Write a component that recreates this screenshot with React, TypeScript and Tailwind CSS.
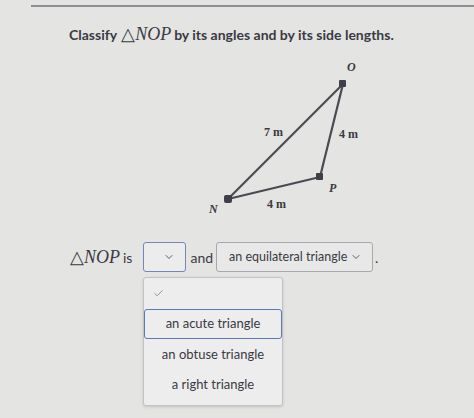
import { ChevronDown, Check } from "lucide-react"

export default function App() {
  return (
    <div className="w-[474px] h-[418px] overflow-hidden bg-[#e4e4e2] text-[#3a3a44] font-['Lato',sans-serif]">
      {/* top rule */}
      <div className="ml-[31px] pt-[5px]">
        <div className="h-[2px] bg-[#8e8e96]" />
      </div>

      {/* question */}
      <div className="mt-[18px] ml-[69px] flex items-baseline text-[14px] font-bold leading-[18px]">
        <span>Classify</span>
        <span className="ml-[4px] mr-[3px] font-['Liberation_Serif',serif] font-normal text-[18px]">
          △<i>NOP</i>
        </span>
        <span>by its angles and by its side lengths.</span>
      </div>

      {/* diagram */}
      <div className="ml-[190px] mt-[11px] h-[164px]">
        <svg width="200" height="164" viewBox="0 0 200 164" className="block">
          <g stroke="#4a4a52" strokeWidth="2.2" fill="none">
            <line x1="38" y1="144" x2="153" y2="29" />
            <line x1="153" y1="29" x2="130" y2="122" />
            <line x1="130" y1="122" x2="38" y2="144" />
          </g>
          <rect x="149" y="25" width="7" height="7" rx="1" fill="#3f3f47" />
          <rect x="126" y="118" width="7" height="7" rx="1" fill="#3f3f47" />
          <rect x="34" y="140" width="8" height="8" rx="2" fill="#3f3f47" />
          <g fontFamily="'Liberation Serif', serif" fontWeight="bold" fontSize="12" fill="#3a3a44">
            <text x="157" y="16" fontStyle="italic">O</text>
            <text x="74" y="81">7 m</text>
            <text x="149" y="83">4 m</text>
            <text x="139" y="137" fontStyle="italic">P</text>
            <text x="19" y="158" fontStyle="italic">N</text>
            <text x="77" y="153">4 m</text>
          </g>
        </svg>
      </div>

      {/* answer row */}
      <div className="mt-[23px] ml-[70px] flex items-center text-[14px]">
        <span className="font-['Liberation_Serif',serif] text-[18px]">
          △<i>NOP</i>
        </span>
        <span className="ml-[3px]">is</span>
        <div className="ml-[11px] w-[43px] h-[30px] rounded-[3px] border border-[#7486b8] bg-[#ececec] flex items-center justify-end pr-[10px]">
          <ChevronDown size={12} strokeWidth={2} className="text-[#5a5a64]" />
        </div>
        <span className="ml-[4px]">and</span>
        <div className="ml-[3px] w-[157px] h-[30px] rounded-[3px] border border-[#a8a8ae] bg-[#e8e8e8] flex items-center pl-[12px] pr-[10px] justify-between text-[12.5px]">
          <span>an equilateral triangle</span>
          <ChevronDown size={12} strokeWidth={2} className="text-[#5a5a64]" />
        </div>
        <span className="ml-[2px]">.</span>
      </div>

      {/* dropdown menu */}
      <div className="mt-[5px] ml-[143px] w-[140px] rounded-[3px] border border-[#c4c4c8] bg-[#ededed] shadow-[0_1px_3px_rgba(0,0,0,0.15)] pb-[5px] text-[13px]">
        <div className="h-[31px] flex items-center pl-[9px]">
          <Check size={11} strokeWidth={2} className="text-[#8a8a92]" />
        </div>
        <div className="h-[30px] rounded-[3px] border-[1.5px] border-[#5c78b4] flex items-center justify-center">
          an acute triangle
        </div>
        <div className="h-[31px] flex items-center justify-center">an obtuse triangle</div>
        <div className="h-[30px] flex items-center justify-center">a right triangle</div>
      </div>
    </div>
  )
}
